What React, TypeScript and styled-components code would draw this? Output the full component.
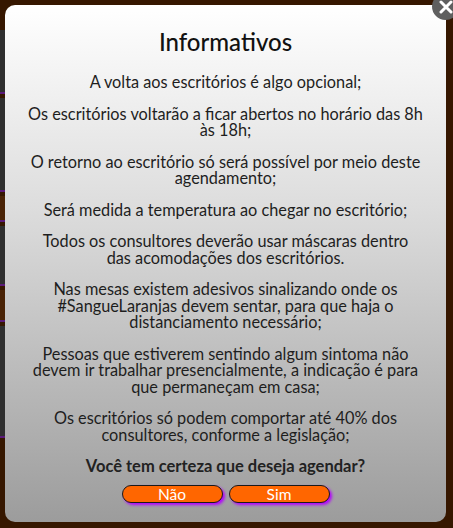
import { Fragment } from "react";
import styled, { createGlobalStyle } from "styled-components";

const GlobalStyle = createGlobalStyle`
  html, body {
    margin: 0;
    padding: 0;
    background: #361700;
  }
  body {
    font-family: "Lato", "Open Sans", sans-serif;
  }
`;

// each notice split the way the original wraps it
const avisos: string[][] = [
  ["A volta aos escritórios é algo opcional;"],
  ["Os escritórios voltarão a ficar abertos no horário das 8h", "às 18h;"],
  ["O retorno ao escritório só será possível por meio deste", "agendamento;"],
  ["Será medida a temperatura ao chegar no escritório;"],
  ["Todos os consultores deverão usar máscaras dentro", "das acomodações dos escritórios."],
  [
    "Nas mesas existem adesivos sinalizando onde os",
    "#SangueLaranjas devem sentar, para que haja o",
    "distanciamento necessário;",
  ],
  [
    "Pessoas que estiverem sentindo algum sintoma não",
    "devem ir trabalhar presencialmente, a indicação é para",
    "que permaneçam em casa;",
  ],
  ["Os escritórios só podem comportar até 40% dos", "consultores, conforme a legislação;"],
];

const App = () => {
  return (
    <>
      <GlobalStyle />
      <Page>
        <Backdrop>
          <BackCard $h={62} />
          <BackCard $h={92} />
          <BackCard $h={24} $accent />
          <BackCard $h={58} />
          <BackCard $h={30} $accent />
          <BackCard $h={110} />
        </Backdrop>

        <Modal>
          <Close aria-label="Fechar">
            <svg width="14" height="14" viewBox="0 0 14 14">
              <path
                d="M2 2 L12 12 M12 2 L2 12"
                stroke="#fff"
                strokeWidth="3"
                strokeLinecap="round"
              />
            </svg>
          </Close>
          <Title>Informativos</Title>
          <List>
            {avisos.map((linhas) => (
              <Item key={linhas[0]}>
                {linhas.map((l, i) => (
                  <Fragment key={l}>
                    {i > 0 && <br />}
                    {l}
                  </Fragment>
                ))}
              </Item>
            ))}
          </List>
          <Question>Você tem certeza que deseja agendar?</Question>
          <Actions>
            <Btn>Não</Btn>
            <Btn>Sim</Btn>
          </Actions>
        </Modal>
      </Page>
    </>
  );
};

export default App;

const Page = styled.div`
  position: relative;
  width: 453px;
  height: 528px;
  overflow: hidden;
  background: #361700;
`;

const Backdrop = styled.div`
  display: flex;
  flex-direction: column;
  gap: 4px;
  padding-top: 30px;
  width: 120px;
`;

const BackCard = styled.div<{ $h: number; $accent?: boolean }>`
  height: ${(p) => p.$h}px;
  background: ${(p) => (p.$accent ? "#4a2306" : "#2f2f2f")};
  border-bottom: 2px solid #5a1a7a;
`;

const Modal = styled.div`
  position: absolute;
  top: 5px;
  left: 5px;
  width: 441px;
  height: 517px;
  box-sizing: border-box;
  border-radius: 10px;
  background: linear-gradient(180deg, #ffffff 0%, #dcdcdc 40%, #9c9c9c 100%);
  padding: 23px 10px 0;
  display: flex;
  flex-direction: column;
  align-items: center;
  color: #1e1e1e;
  text-align: center;
`;

const Close = styled.button`
  position: absolute;
  top: -12px;
  right: -13px;
  width: 27px;
  height: 27px;
  border-radius: 50%;
  border: none;
  background: #5f5f5f;
  display: flex;
  align-items: center;
  justify-content: center;
  padding: 0;
  cursor: pointer;
`;

const Title = styled.h2`
  margin: 0;
  font-size: 24px;
  font-weight: 500;
  line-height: 28px;
  color: #111;
`;

const List = styled.div`
  display: flex;
  flex-direction: column;
  gap: 15px;
  margin-top: 18px;
`;

const Item = styled.p`
  margin: 0;
  font-size: 16.3px;
  line-height: 16.5px;
  white-space: nowrap;
`;

const Question = styled.p`
  margin: 15px 0 0;
  font-size: 16.5px;
  line-height: 16.5px;
  font-weight: 700;
  color: #222;
`;

const Actions = styled.div`
  display: flex;
  gap: 6px;
  margin-top: 10px;
`;

const Btn = styled.button`
  width: 101px;
  height: 18px;
  padding: 0;
  border-radius: 9px;
  border: 1px solid #1a1a1a;
  background: #ff6600;
  color: #fff;
  font-family: "Lato", sans-serif;
  font-size: 15.5px;
  line-height: 16px;
  box-shadow: 2px 2px 3px #b300ff;
  cursor: pointer;
`;
